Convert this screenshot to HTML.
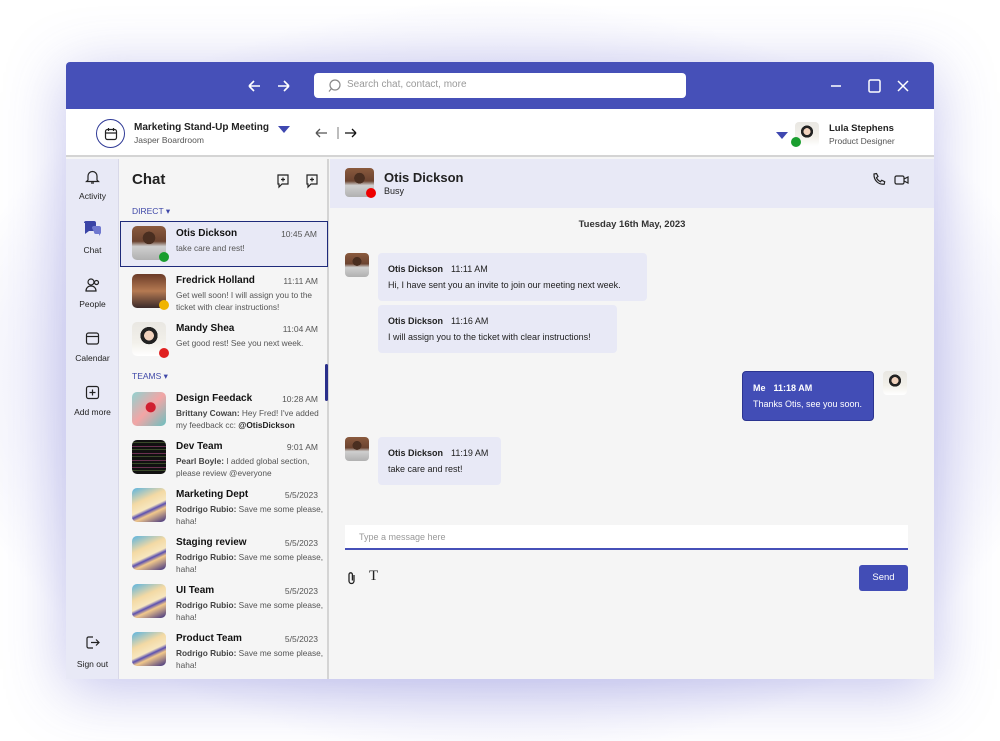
<!DOCTYPE html>
<html><head><meta charset="utf-8"><style>
*{box-sizing:border-box;margin:0;padding:0}
body{width:1000px;height:741px;overflow:hidden;font-family:"Liberation Sans",sans-serif;color:#222;
background:radial-gradient(ellipse 560px 380px at 500px 380px,#c8c9ef 0%,#dcdcf5 55%,#fff 100%);position:relative}
.win{position:absolute;left:66px;top:62px;width:868px;height:617px;background:#f5f5f5;box-shadow:0 10px 60px rgba(80,80,200,.35);border-radius:4px 4px 0 0;overflow:hidden}
.title{position:absolute;left:0;top:0;width:868px;height:47px;background:#4650b8}
.search{position:absolute;left:248px;top:11px;width:372px;height:25px;background:#fff;border-radius:4px;font-size:10px;color:#999;padding:6px 0 0 33px}
.hdr{position:absolute;left:0;top:47px;width:868px;height:48px;background:#fff;border-bottom:2px solid #d4d4d4}
.side{position:absolute;left:0;top:97px;width:53px;height:520px;background:#e8e9f6;border-right:1px solid #d8d8e8}
.side .it{position:absolute;width:53px;text-align:center;font-size:8.5px;color:#222}
.list{position:absolute;left:54px;top:97px;width:209px;height:520px;background:#f5f5f5;border-right:2px solid #d4d4d4}
.row{position:absolute;left:0;width:208px;height:46px}
.av{position:absolute;left:12px;top:5px;width:34px;height:34px;border-radius:5px}
.nm{position:absolute;left:56px;top:6px;font-size:10px;font-weight:bold;color:#111}
.tm{position:absolute;right:10px;top:7px;font-size:8.5px;color:#555}
.sb{position:absolute;left:56px;top:20px;width:150px;font-size:8.3px;color:#555;line-height:12px}
.dot{position:absolute;width:10px;height:10px;border-radius:50%}
.lbl{position:absolute;left:12px;font-size:8.5px;color:#3f48a8}
.team{background:linear-gradient(155deg,#5ab4e0 0%,#f3d9a4 35%,#f7e7c0 55%,#5a4fb0 62%,#f2c98b 70%,#3c2f80 100%)}
.chead{position:absolute;left:264px;top:97px;width:604px;height:49px;background:#e8e9f6}
.bub{position:absolute;background:#e8e9f6;border-radius:4px;font-size:9px;padding:8px 10px;line-height:16px;white-space:nowrap}
.bub b{margin-right:8px}
.ma{position:absolute;width:24px;height:24px;border-radius:4px}
.otis{background:radial-gradient(circle at 50% 35%,#4a2e20 0 22%,transparent 23%),linear-gradient(180deg,#8a5a3e 0%,#6b4330 45%,#cfcfcf 60%,#b0b0b0 100%)}
.lula{background:radial-gradient(circle at 50% 40%,#f1d2bd 0 18%,#222 19% 32%,transparent 33%),linear-gradient(#e9e7e2,#f2f0ea 60%,#fff)}
</style></head><body>
<div class="win">
 <div class="title">
  <svg style="position:absolute;left:180px;top:16px" width="50" height="16" fill="none" stroke="#fff" stroke-width="1.6"><path d="M3 8h11M3 8l5-5M3 8l5 5"/><path d="M32 8h11M43 8l-5-5M43 8l-5 5"/></svg>
  <div class="search">Search chat, contact, more</div>
  <svg style="position:absolute;left:262px;top:17px" width="14" height="14" fill="none" stroke="#888" stroke-width="1.2"><circle cx="7" cy="6" r="5"/><path d="M3.5 9.5L1 12.5"/></svg>
  <svg style="position:absolute;left:760px;top:16px" width="90" height="16" fill="none" stroke="#fff" stroke-width="1.5"><path d="M5 8h10"/><rect x="43" y="2" width="11" height="12" rx="1.5"/><path d="M72 3l10 10M82 3l-10 10"/></svg>
 </div>
 <div class="hdr">
  <div style="position:absolute;left:30px;top:10px;width:29px;height:29px;border:1.5px solid #2f3a96;border-radius:50%"></div>
  <svg style="position:absolute;left:38px;top:18px" width="14" height="14" fill="none" stroke="#222" stroke-width="1.2"><rect x="1.5" y="2.5" width="11" height="10" rx="2"/><path d="M1.5 6h11M4.5 1v3M9.5 1v3"/></svg>
  <div style="position:absolute;left:68px;top:13px;font-size:10px;font-weight:bold">Marketing Stand-Up Meeting</div>
  <div style="position:absolute;left:68px;top:26px;font-size:8.5px;color:#555">Jasper Boardroom</div>
  <div style="position:absolute;left:212px;top:17px;width:0;height:0;border-left:6px solid transparent;border-right:6px solid transparent;border-top:7px solid #3f48b0"></div>
  <svg style="position:absolute;left:248px;top:17px" width="46" height="14" fill="none" stroke-width="1.3"><path d="M2 7h11M2 7l4-4M2 7l4 4" stroke="#555"/><path d="M24 1v12" stroke="#999"/><path d="M31 7h11M42 7l-4-4M42 7l-4 4" stroke="#111"/></svg>
  <div style="position:absolute;left:710px;top:23px;width:0;height:0;border-left:6px solid transparent;border-right:6px solid transparent;border-top:7px solid #3f48b0"></div>
  <div class="lula" style="position:absolute;left:729px;top:13px;width:24px;height:24px;border-radius:4px"></div>
  <div class="dot" style="left:725px;top:28px;background:#1a9e2f"></div>
  <div style="position:absolute;left:763px;top:14px;font-size:9.5px;font-weight:bold">Lula Stephens</div>
  <div style="position:absolute;left:763px;top:27px;font-size:8.5px;color:#555">Product Designer</div>
 </div>
 <div class="side">
  <svg style="position:absolute;left:19px;top:10px" width="15" height="16" fill="none" stroke="#222" stroke-width="1.2"><path d="M3 11V7a4.5 4.5 0 019 0v4l1.5 1.5h-12z M6 14h3"/></svg>
  <div class="it" style="top:32px">Activity</div>
  <svg style="position:absolute;left:17px;top:62px" width="20" height="18"><path d="M1 2a2 2 0 012-2h8a2 2 0 012 2v6a2 2 0 01-2 2H6l-4 3V2z" fill="#3a44a6"/><path d="M9 7a2 2 0 012-2h5a2 2 0 012 2v5l-2 3v-2h-3a2 2 0 01-2-2z" fill="#6f78cf"/></svg>
  <div class="it" style="top:86px">Chat</div>
  <svg style="position:absolute;left:19px;top:118px" width="16" height="16" fill="none" stroke="#222" stroke-width="1.2"><circle cx="6" cy="5" r="3"/><path d="M1 14c0-3 2-5 5-5s5 2 5 5z"/><circle cx="11.5" cy="5.5" r="2"/></svg>
  <div class="it" style="top:140px">People</div>
  <svg style="position:absolute;left:19px;top:172px" width="15" height="15" fill="none" stroke="#222" stroke-width="1.2"><rect x="1.5" y="2" width="12" height="11" rx="2"/><path d="M1.5 5.5h12"/></svg>
  <div class="it" style="top:194px">Calendar</div>
  <svg style="position:absolute;left:19px;top:226px" width="15" height="15" fill="none" stroke="#222" stroke-width="1.2"><rect x="1.5" y="1.5" width="12" height="12" rx="2"/><path d="M7.5 4.5v6M4.5 7.5h6"/></svg>
  <div class="it" style="top:248px">Add more</div>
  <svg style="position:absolute;left:19px;top:476px" width="15" height="15" fill="none" stroke="#222" stroke-width="1.2"><path d="M8 2H3.5a1.5 1.5 0 00-1.5 1.5v8A1.5 1.5 0 003.5 13H8M6 7.5h8M11 4.5l3 3-3 3"/></svg>
  <div class="it" style="top:500px">Sign out</div>
 </div>
 <div class="list">
  <div style="position:absolute;left:12px;top:12px;font-size:15px;font-weight:bold">Chat</div>
  <svg style="position:absolute;left:156px;top:14px" width="44" height="16" fill="none" stroke="#222" stroke-width="1.2"><path d="M2 2h10v9H6l-3 3v-3H2z M7 4.5v4M5 6.5h4"/><path d="M31 2h10v9h-6l-3 3v-3h-1z M36 4.5v4M34 6.5h4"/></svg>
  <div class="lbl" style="top:47px">DIRECT ▾</div>
  <div class="row" style="top:62px;background:#e8e9f6;border:1.5px solid #1e2a7a"><div class="av otis" style="top:4px;left:11px"></div><div class="dot" style="left:38px;top:30px;background:#1a9e2f"></div><div class="nm" style="left:55px">Otis Dickson</div><div class="tm">10:45 AM</div><div class="sb" style="left:55px">take care and rest!</div></div>
  <div class="row" style="top:110px"><div class="av" style="background:linear-gradient(#6a3b28,#b57a52 50%,#3a2a2a)"></div><div class="dot" style="left:39px;top:31px;background:#f0b400"></div><div class="nm">Fredrick Holland</div><div class="tm">11:11 AM</div><div class="sb">Get well soon! I will assign you to the ticket with clear instructions!</div></div>
  <div class="row" style="top:158px"><div class="av lula"></div><div class="dot" style="left:39px;top:31px;background:#e02020"></div><div class="nm">Mandy Shea</div><div class="tm">11:04 AM</div><div class="sb">Get good rest! See you next week.</div></div>
  <div class="lbl" style="top:212px">TEAMS ▾</div>
  <div style="position:absolute;left:205px;top:205px;width:3px;height:37px;background:#2a2f8a;border-radius:2px"></div>
  <div class="row" style="top:228px"><div class="av" style="background:radial-gradient(circle at 55% 45%,#d02030 0 18%,transparent 20%),linear-gradient(135deg,#8fd2d0,#f3a5a5 50%,#6ac0c0)"></div><div class="nm">Design Feedack</div><div class="tm">10:28 AM</div><div class="sb"><b style="color:#444">Brittany Cowan:</b> Hey Fred! I've added my feedback cc: <b style="color:#222">@OtisDickson</b></div></div>
  <div class="row" style="top:276px"><div class="av" style="background:repeating-linear-gradient(0deg,#111 0 3px,#3a4a2a 3px 4px,#111 4px 6px,#6a3050 6px 7px)"></div><div class="nm">Dev Team</div><div class="tm">9:01 AM</div><div class="sb"><b style="color:#444">Pearl Boyle:</b> I added global section, please review @everyone</div></div>
  <div class="row" style="top:324px"><div class="av team"></div><div class="nm">Marketing Dept</div><div class="tm">5/5/2023</div><div class="sb"><b style="color:#444">Rodrigo Rubio:</b> Save me some please, haha!</div></div>
  <div class="row" style="top:372px"><div class="av team"></div><div class="nm">Staging review</div><div class="tm">5/5/2023</div><div class="sb"><b style="color:#444">Rodrigo Rubio:</b> Save me some please, haha!</div></div>
  <div class="row" style="top:420px"><div class="av team"></div><div class="nm">UI Team</div><div class="tm">5/5/2023</div><div class="sb"><b style="color:#444">Rodrigo Rubio:</b> Save me some please, haha!</div></div>
  <div class="row" style="top:468px"><div class="av team"></div><div class="nm">Product Team</div><div class="tm">5/5/2023</div><div class="sb"><b style="color:#444">Rodrigo Rubio:</b> Save me some please, haha!</div></div>
 </div>
 <div class="chead">
  <div class="otis" style="position:absolute;left:15px;top:9px;width:29px;height:29px;border-radius:4px"></div>
  <div class="dot" style="left:36px;top:29px;background:#e00"></div>
  <div style="position:absolute;left:54px;top:11px;font-size:13px;font-weight:bold">Otis Dickson</div>
  <div style="position:absolute;left:54px;top:27px;font-size:9px">Busy</div>
  <svg style="position:absolute;left:541px;top:13px" width="40" height="16" fill="none" stroke="#222" stroke-width="1.2"><path d="M3 2l2.5-.5 1.5 3-1.5 1.2a8 8 0 004 4l1.2-1.5 3 1.5-.5 2.5c-6 .5-10.5-4-10.2-10.2z"/><rect x="24" y="4" width="9" height="8" rx="1.5"/><path d="M33 7l4-2v6l-4-2"/></svg>
 </div>
 <div style="position:absolute;left:264px;top:157px;width:604px;text-align:center;font-size:9.5px;font-weight:bold;color:#333">Tuesday 16th May, 2023</div>
 <div class="ma otis" style="left:279px;top:191px"></div>
 <div class="bub" style="left:312px;top:191px;width:269px"><b>Otis Dickson</b>11:11 AM<br>Hi, I have sent you an invite to join our meeting next week.</div>
 <div class="bub" style="left:312px;top:243px;width:239px"><b>Otis Dickson</b>11:16 AM<br>I will assign you to the ticket with clear instructions!</div>
 <div class="bub" style="left:676px;top:309px;width:132px;background:#424db6;color:#fff;border:1px solid #2b3490"><b>Me</b><b style="margin:0">11:18 AM</b><br>Thanks Otis, see you soon.</div>
 <div class="ma lula" style="left:817px;top:309px"></div>
 <div class="ma otis" style="left:279px;top:375px"></div>
 <div class="bub" style="left:312px;top:375px;width:123px"><b>Otis Dickson</b>11:19 AM<br>take care and rest!</div>
 <div style="position:absolute;left:279px;top:463px;width:563px;height:25px;background:#fff;border-bottom:2px solid #4650b8;font-size:9px;color:#999;padding:7px 0 0 14px">Type a message here</div>
 <svg style="position:absolute;left:280px;top:509px" width="12" height="14" fill="none" stroke="#222" stroke-width="1.3"><path d="M8 4v6a2.5 2.5 0 01-5 0V3.5a1.7 1.7 0 013.4 0V9.5"/></svg>
 <div style="position:absolute;left:303px;top:506px;font-family:'Liberation Serif',serif;font-size:15px">T</div>
 <div style="position:absolute;left:793px;top:503px;width:49px;height:26px;background:#424db6;border-radius:3px;color:#fff;font-size:9.5px;text-align:center;line-height:26px">Send</div>
</div>
</body></html>
